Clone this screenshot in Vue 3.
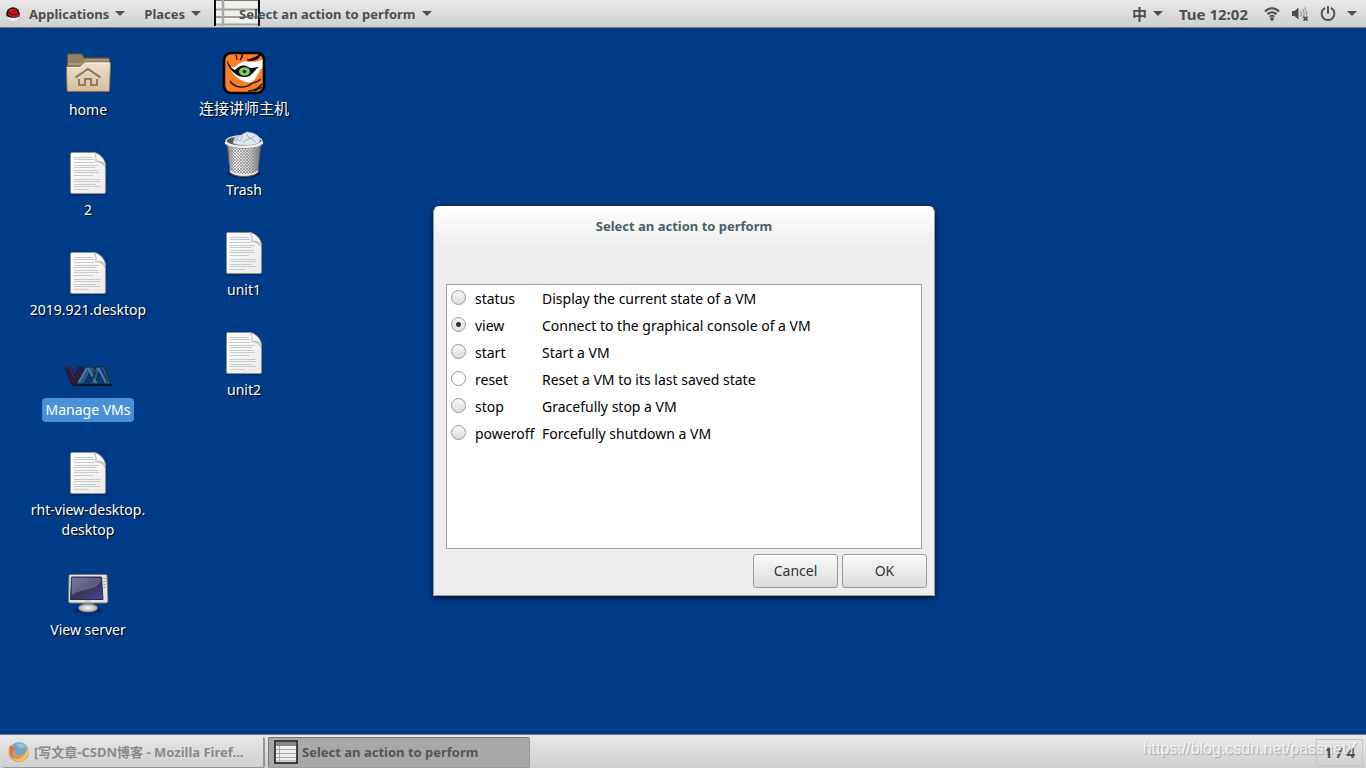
<script setup>
import { ref } from "vue";

const leftIcons = [
  { id: "home", label: "home", icon: "folder" },
  { id: "two", label: "2", icon: "file" },
  { id: "d921", label: "2019.921.desktop", icon: "file" },
  { id: "vms", label: "Manage VMs", icon: "vm" },
  { id: "rht", label: "rht-view-desktop. desktop", icon: "file" },
  { id: "server", label: "View server", icon: "monitor" },
];

const rightIcons = [
  { id: "vnc", label: "连接讲师主机", icon: "tiger" },
  { id: "trash", label: "Trash", icon: "trash" },
  { id: "unit1", label: "unit1", icon: "file" },
  { id: "unit2", label: "unit2", icon: "file" },
];

const columns = [leftIcons, rightIcons];

const actions = [
  { name: "status", description: "Display the current state of a VM" },
  { name: "view", description: "Connect to the graphical console of a VM" },
  { name: "start", description: "Start a VM" },
  { name: "reset", description: "Reset a VM to its last saved state" },
  { name: "stop", description: "Gracefully stop a VM" },
  { name: "poweroff", description: "Forcefully shutdown a VM" },
];

const selectedIcon = ref("vms");
const selectedAction = ref("view");
const hoveredAction = ref("reset");
const dialogOpen = ref(true);

function closeDialog() {
  dialogOpen.value = false;
}
</script>

<template>
  <div class="screen">
    <header class="top-panel">
      <nav class="menus">
        <button class="menu applications" type="button">
          <svg class="redhat" viewBox="0 0 14 14" aria-hidden="true">
            <circle cx="7" cy="7" r="6.8" fill="#111" />
            <path d="M.5 9c3 1.500 8 3 13 .5C12.500 12.500 10 14 7 14S1 12 .5 9z" fill="#f4f4f4" />
            <path d="M1.500 7.500C3 6 2.500 3 4 2c1-.6 2 .4 3 0 2-.6 3 0 4 2l.6 2c2 1 2 3 0 4-3 .8-7.500-.3-10.100-2.500z" fill="#cc1517" />
            <path d="M3.600 6c2 1.500 5 2.300 7.600 1.400" fill="none" stroke="#40090a" stroke-width="0.800" />
          </svg>
          <span>Applications</span>
          <i class="caret"></i>
        </button>
        <button class="menu places" type="button"><span>Places</span><i class="caret"></i></button>
        <button class="menu app-menu" type="button">
          <svg class="app-menu-icon" viewBox="0 0 46 26" aria-hidden="true">
            <rect width="46" height="26" fill="#f0f0ed" />
            <rect x="2" width="42" height="1" fill="#777" />
            <path d="M2 9.500h42M2 17h42M2 24.500h42" stroke="#a0a09e" stroke-width="2" />
            <path d="M9 0v26" stroke="#aaa" stroke-width="2.500" />
            <path d="M1 0v26M45 0v26" stroke="#0c0c0c" stroke-width="2" />
          </svg>
          <span class="app-menu-text">Select an action to perform</span>
          <i class="caret"></i>
        </button>
      </nav>
      <div class="indicators">
        <button class="menu input-method" type="button"><span>中</span><i class="caret"></i></button>
        <button class="menu clock" type="button">Tue 12:02</button>
        <button class="menu system" type="button" aria-label="System menu">
          <svg width="16" height="16" viewBox="0 0 16 16" fill="none" stroke="#4d5052" aria-hidden="true">
            <path d="M1 5.500c4-4.300 10-4.300 14 0" stroke-width="2" />
            <path d="M3.400 8.300c2.800-2.900 6.400-2.900 9.200 0" stroke-width="2" />
            <path d="M5.600 10.800c1.500-1.600 3.300-1.600 4.800 0" stroke-width="1.600" />
            <circle cx="8" cy="12.800" r="1.900" fill="#4d5052" stroke="none" />
          </svg>
          <svg width="18" height="16" viewBox="0 0 18 16" fill="none" aria-hidden="true">
            <path d="M1 5h2.500L7.500 1.500v12L3.500 10H1z" fill="#4d5052" />
            <path d="M9.500 5c1 1.500 1 4 0 5.500M11.500 3.200c1.900 2.800 1.900 6.200 0 9M13.500 1.500c2 3 2.500 5.500 1.800 8" stroke="#9b9b9b" stroke-width="1.300" />
            <path d="M12.500 10.700l4 4M16.500 10.700l-4 4" stroke="#4d5052" stroke-width="1.800" />
          </svg>
          <svg width="16" height="16" viewBox="0 0 16 16" fill="none" stroke="#4d5052" stroke-width="1.900" stroke-linecap="round" aria-hidden="true">
            <path d="M4.500 2.200a6.400 6.400 0 1 0 7 0M8 1v6" />
          </svg>
          <i class="caret"></i>
        </button>
      </div>
    </header>

    <main class="desktop">
      <ul v-for="(items, index) in columns" :key="index" class="icon-column" :class="{ shifted: index === 1 }">
        <li v-for="item in items" :key="item.id">
          <button
            class="desktop-icon"
            :class="[item.icon, { selected: selectedIcon === item.id }]"
            type="button"
            @click="selectedIcon = item.id"
          >
            <span class="icon-box">
              <svg v-if="item.icon === 'folder'" width="48" height="48" viewBox="0 2 48 48" aria-hidden="true">
                <defs>
                  <linearGradient id="folderFront" x1="0" y1="0" x2="0" y2="1">
                    <stop offset="0" stop-color="#ede2d3" />
                    <stop offset="1" stop-color="#d3bd9e" />
                  </linearGradient>
                </defs>
                <path d="M3.500 39V6.500q0-1.500 1.500-1.500h12q1.500 0 2 2l1 2h24q1.500 0 1.500 2v28z" fill="#94815f" stroke="#6c5637" />
                <path d="M4 15h14l4-4h23" fill="none" stroke="#c3ae8c" />
                <path d="M2.500 17.500H15q2 0 3-2l1-1q1-1.500 3-1.500h23q1.500 0 1.500 1.500L45.500 41q0 1.500-1.500 1.500H4.500Q3 42.500 3 41z" fill="url(#folderFront)" stroke="#8f6f42" />
                <path d="M3.500 18.500h12q3 0 4-3 1-1.500 3-1.500h23" fill="none" stroke="#faf4ec" />
                <path d="M11.500 28.500L24 20l12.500 8.500" fill="none" stroke="#8d7250" stroke-width="2" />
                <path d="M15 30v6h6v-6h6v6h6v-6" fill="none" stroke="#94795a" stroke-width="2" />
              </svg>

              <svg v-else-if="item.icon === 'file'" width="48" height="48" viewBox="0 1 48 48" aria-hidden="true">
                <defs>
                  <linearGradient id="paper" x1="0" y1="0" x2="1" y2="1">
                    <stop offset="0" stop-color="#ffffff" />
                    <stop offset="1" stop-color="#e9e9e7" />
                  </linearGradient>
                </defs>
                <path d="M6 44.500h36" stroke="#002b66" stroke-width="2" opacity="0.700" />
                <path d="M6.500 4q0-1.500 1.500-1.500h22q7 1 11.500 12V42q0 1.500-1.500 1.500H8q-1.500 0-1.500-1.500z" fill="url(#paper)" stroke="#8e908a" />
                <path
                  d="M10 7.500h19M10 9.500h20M10 12.500h20M10 15.500h25M10 17.500h22M10 20.500h24M10 22.500h25M10 25.500h19M10 29.500h26M10 31.500h26M10 34.500h22M10 36.500h26M10 39.500h15"
                  stroke="#cacac8"
                />
                <path d="M29.500 2.500c3 3 3 6 2 9 3-1 7 0 10 3-1-6-6-11-12-12z" fill="#fafafa" stroke="#a5a6a2" stroke-width="0.800" />
                <path d="M32 12c4-1 7 0 9 3v3c-2-4-5-5-9-6z" fill="#b5b5b2" opacity="0.700" />
              </svg>

              <svg v-else-if="item.icon === 'vm'" width="48" height="24" viewBox="0 0 48 24" aria-hidden="true">
                <path d="M8 21h40l-1 2H9z" fill="#081525" />
                <path d="M1 4h6l3 9 5-9h5l-9 17H7z" fill="#36183c" stroke="#1c1b30" />
                <path d="M2 4h4l4 11" fill="none" stroke="#5c294a" />
                <path d="M12 21L22 4h8l5 17h-6L26 9l-6 12z" fill="#2b5780" stroke="#14263e" />
                <path d="M25 21L32 4h8l7 17h-7L35 9l-4 12z" fill="#2e5d88" stroke="#14263e" />
                <path d="M15 19l8-14M24 5l8 15M34 5l8 14" stroke="#4b7ba6" stroke-width="2" />
                <path d="M27 20l5-12M37 5l7 14" stroke="#1b3b5e" stroke-width="2" />
              </svg>

              <svg v-else-if="item.icon === 'monitor'" width="48" height="48" viewBox="0 1 48 48" aria-hidden="true">
                <defs>
                  <linearGradient id="crt" x1="0" y1="0" x2="1" y2="1">
                    <stop offset="0" stop-color="#625f93" />
                    <stop offset="0.500" stop-color="#353554" />
                    <stop offset="1" stop-color="#4548a0" />
                  </linearGradient>
                  <radialGradient id="stand">
                    <stop offset="0" stop-color="#ffffff" />
                    <stop offset="1" stop-color="#a6a89f" />
                  </radialGradient>
                </defs>
                <ellipse cx="24" cy="40" rx="14" ry="4" fill="#001d4d" opacity="0.600" />
                <path d="M19 32h10l1 6H18z" fill="#8b8e85" />
                <ellipse cx="24" cy="38" rx="9.500" ry="4" fill="url(#stand)" stroke="#858881" />
                <path d="M6 4.500h36q1 0 1 1L44 31q0 2-2 2H6.500q-2 0-2-2L5 5.500q0-1 1-1z" fill="#e5e6dd" stroke="#767b70" />
                <path d="M7.500 7h30l1.500 22.500H6.500z" fill="url(#crt)" stroke="#29295a" />
                <path d="M8 8h29v3C29 23 20 17 8 25z" fill="#aaa9c8" opacity="0.350" />
                <path d="M40.500 8v12" stroke="#999c91" stroke-width="2" stroke-dasharray="1 2" />
                <path d="M21 31h6" stroke="#adb0a5" />
              </svg>

              <svg v-else-if="item.icon === 'tiger'" class="tiger-face" width="44" height="44" viewBox="0 0 44 44" aria-hidden="true">
                <rect x="2" y="2" width="40" height="40" rx="7" fill="#ff7d24" />
                <path d="M6 14c3 5 6 12 13 15 4 2 9 4 12 1 5-4 5-10 10-14V8c-5 4-9 2-14 3-5-2-10 1-14 5-3 1-5-1-7-2z" fill="#fff" />
                <path d="M5 9c0 5 3 9 6 12 3 3 7 5 13 5 7-1 8-7 13-10-5 0-7 2-11 0-5-3-9-1-13 3-3-1-6-5-8-10z" fill="#090909" />
                <ellipse cx="22.500" cy="20.500" rx="5.500" ry="4.200" fill="#83ce62" />
                <circle cx="22.500" cy="20.500" r="1.800" fill="#174016" />
                <path d="M14 4l1 5M20 3c1 2 0 4-2 6M25 9c5 0 8-3 13-5-2 5-8 6-13 5z" fill="#0b0b0b" stroke="#0b0b0b" stroke-width="1.200" />
                <path d="M8 30c5 8 16 7 21 3 4-2 7-2 10-5M26 40c5 0 10-2 14-7M32 40c4-1 6-3 8-4" fill="none" stroke="#24170c" stroke-width="1.500" />
                <rect x="2" y="2" width="40" height="40" rx="7" fill="none" stroke="#050505" stroke-width="2.600" />
              </svg>

              <svg v-else width="48" height="50" viewBox="0 0 48 50" aria-hidden="true">
                <defs>
                  <linearGradient id="bin" x1="0" y1="0" x2="1" y2="0">
                    <stop offset="0" stop-color="#8c8c8c" />
                    <stop offset="0.250" stop-color="#f2f2f2" />
                    <stop offset="0.700" stop-color="#d0d0d0" />
                    <stop offset="1" stop-color="#777" />
                  </linearGradient>
                  <pattern id="mesh" width="3" height="3" patternUnits="userSpaceOnUse">
                    <path d="M0 0l3 3M3 0L0 3" stroke="#74777b" stroke-width="0.600" />
                  </pattern>
                </defs>
                <ellipse cx="24" cy="44" rx="18" ry="4" fill="#001e49" opacity="0.600" />
                <path d="M7 11l3 31c4 6 24 6 28 0l3-31z" fill="url(#bin)" stroke="#565956" />
                <path d="M8 16h32l-3 26c-5 4-21 4-26 0z" fill="url(#mesh)" />
                <path d="M10 41c4 5 24 5 28 0" fill="none" stroke="#e8e8e8" stroke-width="1.500" />
                <ellipse cx="24" cy="11" rx="18" ry="5.500" fill="#55585b" stroke="#d8d8d6" stroke-width="1.500" />
                <path d="M13 13l2-6 5-1 3-2 4-2 5 1 3 1 3 2 2 3-1 4c-8 3-20 3-26 0z" fill="#dfe6f2" stroke="#b9c4d8" stroke-width="0.600" />
                <path d="M15 8l5 3 3-6M27 4l2 5 6-3M23 12l7-4 6 4M18 7l-3 5" fill="none" stroke="#a6b5cf" />
                <path d="M6 12c1 7 35 7 36 0" fill="none" stroke="#f0f0ee" stroke-width="3" />
                <path d="M6 14c3 6 33 6 36 0" fill="none" stroke="#7c7f7c" stroke-width="0.800" />
              </svg>
            </span>
            <span class="icon-label">{{ item.label }}</span>
          </button>
        </li>
      </ul>

      <section v-if="dialogOpen" class="dialog" role="dialog" aria-labelledby="dialog-title">
        <h1 id="dialog-title" class="dialog-title">Select an action to perform</h1>
        <div class="action-list">
          <label
            v-for="action in actions"
            :key="action.name"
            class="action-row"
            @mouseenter="hoveredAction = action.name"
          >
            <input
              v-model="selectedAction"
              type="radio"
              name="action"
              :value="action.name"
              :class="{ hovered: hoveredAction === action.name }"
            />
            <span>{{ action.name }}</span>
            <span>{{ action.description }}</span>
          </label>
        </div>
        <div class="dialog-buttons">
          <button type="button" @click="closeDialog">Cancel</button>
          <button type="button" @click="closeDialog">OK</button>
        </div>
      </section>
    </main>

    <footer class="bottom-panel">
      <button class="task" type="button">
        <svg width="22" height="22" viewBox="0 0 22 22" aria-hidden="true">
          <circle cx="11" cy="10.500" r="9.500" fill="#6ba7cf" />
          <path d="M8 3c4-2 9 0 11 4-2-1-4-1-5 1-2-1-4-2-6-5z" fill="#91c6dd" />
          <path d="M2 4c1 1 3 1 4 2 2 0 3 1 2 3l-2 1c0 4 4 6 8 4 3-1 4-4 3-8 5 4 5 10 0 13-5 4-13 2-16-4C0 11 1 7 2 4z" fill="#e59655" />
          <path d="M20 6c2 6-1 12-6 14-5 1-9-1-11-4 5 4 14 3 17-10z" fill="#efc36b" />
          <path d="M2 5c-1 5 0 9 4 12-1-4-2-6 0-8L9 8 6 6z" fill="#d67855" />
        </svg>
        <span>[写文章-CSDN博客 - Mozilla Firef...</span>
      </button>
      <button class="task active" type="button">
        <svg width="24" height="24" viewBox="0 0 24 24" aria-hidden="true">
          <rect x="1" y="1" width="22" height="22" fill="#efefeb" stroke="#111" stroke-width="1.500" />
          <rect x="2" y="2" width="20" height="4" fill="#858782" />
          <path d="M2 9.500h20M2 13.500h20M2 17.500h20M2 21h20M5.500 6v16" stroke="#aaa9a4" />
        </svg>
        <span>Select an action to perform</span>
      </button>
      <button class="workspace" type="button">1 / 4</button>
      <span class="watermark">https://blog.csdn.net/passnetY</span>
    </footer>
  </div>
</template>

<style>
body {
  margin: 0;
  background: #003b87;
}
</style>

<style scoped>
.screen {
  display: flex;
  flex-direction: column;
  min-height: 100vh;
  overflow: hidden;
  background: #003b87;
  font-family: "Noto Sans", "Noto Sans CJK SC", sans-serif;
  font-size: 14px;
}

button {
  margin: 0;
  padding: 0;
  border: none;
  background: none;
  color: inherit;
  font: inherit;
}

svg {
  flex: none;
}

.top-panel {
  display: flex;
  justify-content: space-between;
  box-sizing: border-box;
  height: 28px;
  border-bottom: 1px solid #777a7c;
  background: linear-gradient(#e9e9e9, #d0d0d0);
  color: #4d5052;
  font-size: 13px;
  font-weight: 700;
  text-shadow: 0 1px #f4f4f4;
}

.menus,
.indicators,
.menu {
  display: flex;
  align-items: center;
}

.menu {
  height: 27px;
  gap: 6px;
  white-space: nowrap;
}

.caret {
  flex: none;
  border: 5px solid transparent;
  border-top-color: #4d5052;
  border-bottom: none;
}

.applications {
  padding-left: 6px;
}

.redhat {
  width: 14px;
  height: 14px;
  margin-right: 3px;
}

.places {
  margin-left: 19px;
}

.app-menu {
  position: relative;
  margin-left: 13px;
  padding-left: 25px;
}

.app-menu-icon {
  position: absolute;
  top: 0;
  left: 0;
  width: 46px;
  height: 26px;
}

.app-menu-text {
  position: relative;
}

.indicators {
  gap: 16px;
  padding-right: 9px;
}

.input-method {
  font-size: 15px;
}

.clock {
  font-size: 15px;
}

.system {
  gap: 11px;
}

.desktop {
  position: relative;
  display: flex;
  flex: 1;
  align-items: flex-start;
  padding: 22px 10px;
}

.icon-column {
  display: flex;
  flex-direction: column;
  gap: 30px;
  width: 156px;
  margin: 0;
  padding: 0;
  list-style: none;
}

.icon-column.shifted {
  margin-top: -2px;
}

.icon-column.shifted li:first-child {
  margin-bottom: -18px;
}

.desktop-icon {
  display: flex;
  flex-direction: column;
  align-items: center;
  width: 100%;
  color: #fff;
}

.icon-box {
  display: flex;
  align-items: center;
  justify-content: center;
  height: 50px;
}

.icon-label {
  max-width: 130px;
  padding: 0 5px;
  border-radius: 4px;
  line-height: 20px;
  text-shadow: 1px 1px 1px #000;
}

.tiger .icon-label {
  font-size: 15px;
}

.selected .icon-label {
  margin: -2px 0;
  padding: 2px 3px;
  background: #4a90d9;
  text-shadow: none;
}

.dialog {
  position: absolute;
  top: 178px;
  left: 433px;
  display: flex;
  flex-direction: column;
  box-sizing: border-box;
  width: 502px;
  padding: 0 7px 7px;
  border: 1px solid #9a9c98;
  border-top-color: #fff;
  border-radius: 6px 6px 0 0;
  background: linear-gradient(#fff, #ededed 40px);
  box-shadow: 0 2px 6px rgba(0, 0, 0, 0.7);
}

.dialog-title {
  margin: 0 0 39px;
  color: #4b5f66;
  font-size: 13px;
  line-height: 38px;
  text-align: center;
}

.action-list {
  box-sizing: border-box;
  min-height: 265px;
  margin: 0 5px 5px;
  padding: 0 4px;
  border: 1px solid #a1a1a1;
  background: #fff;
  color: #000;
}

.action-row {
  display: grid;
  grid-template-columns: 24px 67px 1fr;
  align-items: center;
  line-height: 27px;
}

.action-row input {
  appearance: none;
  display: block;
  width: 15px;
  height: 15px;
  margin: 0 0 3px;
  border: 1px solid #999;
  border-radius: 50%;
  background: linear-gradient(#f8f8f8, #dcdcdc);
}

.action-row input.hovered {
  background: #fff;
}

.action-row input:checked {
  background: radial-gradient(circle, #2e3436 2px, transparent 3px), linear-gradient(#f5f5f5, #dedede);
}

.dialog-buttons {
  display: flex;
  justify-content: flex-end;
  gap: 4px;
}

.dialog-buttons button {
  box-sizing: border-box;
  width: 85px;
  height: 34px;
  padding-bottom: 2px;
  border: 1px solid #9a9a9a;
  border-radius: 3px;
  background: linear-gradient(#f9f9f9, #dcdcdc);
  box-shadow: inset 0 1px #fff;
  color: #2e3436;
}

.bottom-panel {
  position: relative;
  display: flex;
  align-items: center;
  box-sizing: border-box;
  height: 34px;
  padding: 1px 3px 0;
  gap: 3px;
  border-top: 1px solid #777a7c;
  background: linear-gradient(#e9e9e9, #cfcfcf);
  color: #4d5052;
  font-size: 13px;
  font-weight: 700;
}

.task {
  display: flex;
  align-items: center;
  box-sizing: border-box;
  width: 262px;
  height: 31px;
  padding: 0 5px;
  gap: 4px;
  border-right: 2px solid #969696;
  border-bottom: 1px solid #969696;
  border-radius: 2px;
  color: #898989;
  white-space: nowrap;
}

.task.active {
  border: 1px solid #999;
  border-top-color: #777;
  border-left-color: #777;
  background: #a8a8a8;
  color: #555;
}

.workspace {
  box-sizing: border-box;
  width: 47px;
  height: 27px;
  margin-left: auto;
  border: 1px solid #c4c4c4;
  font-size: 15px;
}

.watermark {
  position: absolute;
  top: 4px;
  right: 9px;
  color: rgba(255, 255, 255, 0.8);
  font-family: "Liberation Sans", sans-serif;
  font-size: 16px;
  font-weight: 400;
  line-height: 20px;
  text-shadow: 1px 1px 1px rgba(0, 0, 0, 0.25);
  pointer-events: none;
}
</style>
